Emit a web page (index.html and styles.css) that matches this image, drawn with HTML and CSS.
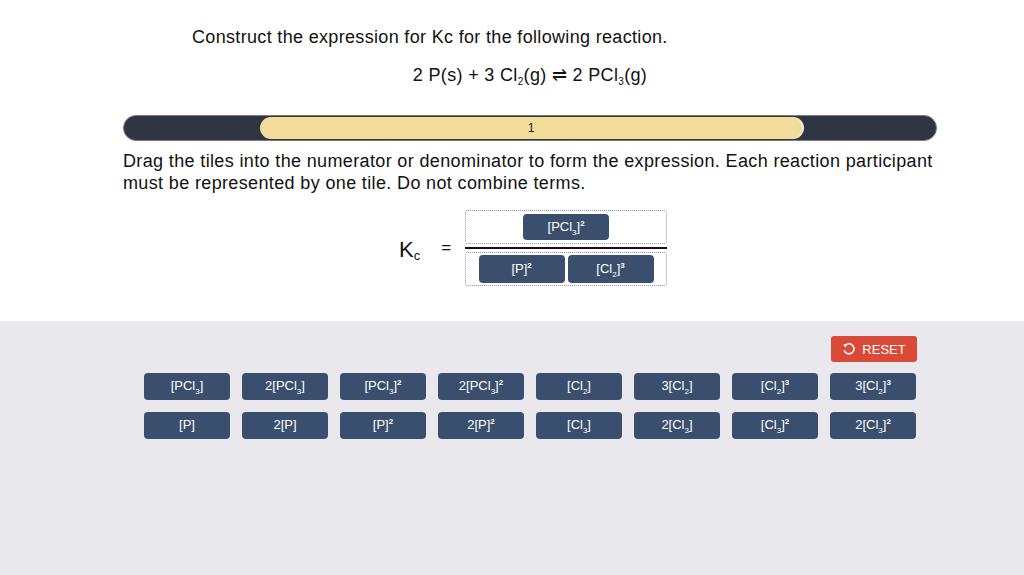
FILE: index.html
```html
<!DOCTYPE html>
<html>
<head>
<meta charset="utf-8">
<link rel="stylesheet" href="styles.css">
</head>
<body>
<div class="top">
  <div class="container">
    <p class="title">Construct the expression for Kc for the following reaction.</p>
    <p class="reaction">2 P(s) + 3 Cl<sub>2</sub>(g) <span class="eq">&#8652;</span> 2 PCl<sub>3</sub>(g)</p>
    <div class="progress"><div class="fill">1</div></div>
    <p class="instr">Drag the tiles into the numerator or denominator to form the expression. Each reaction participant must be represented by one tile. Do not combine terms.</p>
    <div class="kcrow">
      <div class="kc">K<sub>c</sub></div>
      <div class="equals">=</div>
      <div class="frac">
        <div class="zone num"><div class="tile">[PCl<sub>3</sub>]<sup>2</sup></div></div>
        <div class="bar"></div>
        <div class="zone den"><div class="tile">[P]<sup>2</sup></div><div class="tile">[Cl<sub>2</sub>]<sup>3</sup></div></div>
      </div>
    </div>
  </div>
</div>
<div class="bottom">
  <div class="grid-wrap">
    <div class="reset-row">
      <button class="reset"><svg width="14" height="14" viewBox="0 0 14 14"><path d="M3.2 3.6 A5 5 0 1 1 2.2 8.2" fill="none" stroke="#fff" stroke-width="1.5"/><path d="M1.2 2.2 L5.2 2.4 L3.4 5.8 Z" fill="#fff"/></svg>RESET</button>
    </div>
    <div class="tiles">
      <div class="tile">[PCl<sub>3</sub>]</div>
      <div class="tile">2[PCl<sub>3</sub>]</div>
      <div class="tile">[PCl<sub>3</sub>]<sup>2</sup></div>
      <div class="tile">2[PCl<sub>3</sub>]<sup>2</sup></div>
      <div class="tile">[Cl<sub>2</sub>]</div>
      <div class="tile">3[Cl<sub>2</sub>]</div>
      <div class="tile">[Cl<sub>2</sub>]<sup>3</sup></div>
      <div class="tile">3[Cl<sub>2</sub>]<sup>3</sup></div>
      <div class="tile">[P]</div>
      <div class="tile">2[P]</div>
      <div class="tile">[P]<sup>2</sup></div>
      <div class="tile">2[P]<sup>2</sup></div>
      <div class="tile">[Cl<sub>3</sub>]</div>
      <div class="tile">2[Cl<sub>3</sub>]</div>
      <div class="tile">[Cl<sub>3</sub>]<sup>2</sup></div>
      <div class="tile">2[Cl<sub>3</sub>]<sup>2</sup></div>
    </div>
  </div>
</div>
</body>
</html>
```
FILE: styles.css
```css
* { box-sizing: border-box; }
html, body { margin: 0; padding: 0; }
body {
  width: 1024px;
  height: 575px;
  font-family: "Liberation Sans", Arial, sans-serif;
  color: #111;
  background: #e9e8ed;
  overflow: hidden;
}
.top {
  background: #fff;
  height: 321px;
}
.container {
  width: 814px;
  margin-left: 123px;
  padding-top: 26px;
}
p { margin: 0; }
.title {
  font-size: 18px;
  letter-spacing: 0.33px;
  line-height: 22px;
  margin-left: 69px;
}
.reaction {
  font-size: 18px;
  letter-spacing: 0.33px;
  line-height: 22px;
  text-align: center;
  margin-top: 16px;
}
.reaction sub {
  font-size: 10px;
  vertical-align: -4px;
  line-height: 0;
}
.progress {
  margin-top: 29px;
  height: 26px;
  background: #2f3542;
  border-radius: 13px;
  border: 1px solid #7a7c80;
  padding: 1px 0 1px 136px;
  display: flex;
}
.fill {
  width: 542px;
  height: 22px;
  background: #f2dc9a;
  border-radius: 11px;
  box-shadow: 2px 0 0 #ecebe6;
  font-size: 12px;
  line-height: 22px;
  text-align: center;
  color: #222;
}
.instr {
  font-size: 18px;
  letter-spacing: 0.36px;
  line-height: 22px;
  margin-top: 9px;
}
.kcrow {
  display: flex;
  align-items: center;
  justify-content: center;
  margin-top: 16px;
  margin-left: 6px;
}
.kc {
  font-size: 22px;
  line-height: 24px;
  margin-top: 4px;
}
.kc sub {
  font-size: 13px;
  vertical-align: -3px;
  line-height: 0;
}
.equals {
  font-size: 17px;
  margin-left: 21px;
  margin-right: 14px;
}
.frac {
  width: 202px;
  display: flex;
  flex-direction: column;
}
.zone {
  border: 1px dotted #8a93a6;
  border-radius: 3px;
  height: 34px;
  display: flex;
  justify-content: center;
  align-items: center;
  gap: 3px;
}
.bar {
  height: 2px;
  background: #111;
  margin: 3px 0 3px;
}
.tile {
  width: 86px;
  height: 27px;
  background: #3a4e6d;
  border-radius: 4px;
  color: #fff;
  font-size: 13px;
  line-height: 26px;
  text-align: center;
  white-space: nowrap;
}
.tile sub {
  font-size: 8px;
  vertical-align: -4px;
  line-height: 0;
}
.tile sup {
  font-size: 8px;
  vertical-align: 5px;
  line-height: 0;
  font-weight: bold;
}
.num .tile { height: 26px; line-height: 25px; }
.den .tile { height: 28px; line-height: 27px; }
.grid-wrap {
  width: 772px;
  margin-left: 144px;
  padding-top: 15px;
}
.reset-row {
  display: flex;
  justify-content: flex-end;
}
.reset {
  width: 86px;
  height: 26px;
  margin-right: -1px;
  background: #d94b38;
  border: none;
  border-radius: 3px;
  color: #fff;
  font-family: "Liberation Sans", Arial, sans-serif;
  font-size: 13px;
  display: flex;
  align-items: center;
  justify-content: center;
  gap: 6px;
  padding: 0;
}
.tiles {
  margin-top: 11px;
  display: grid;
  grid-template-columns: repeat(8, 86px);
  column-gap: 12px;
  row-gap: 12px;
}
```
